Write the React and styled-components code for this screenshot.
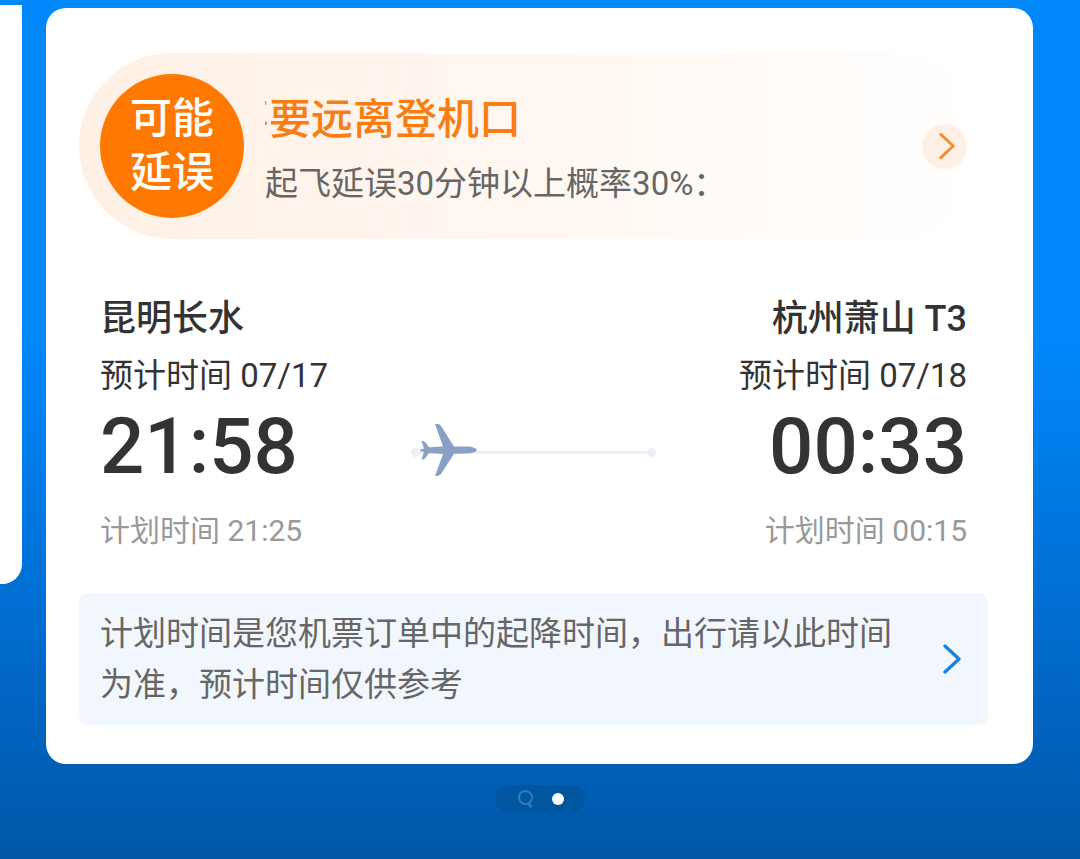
import styled, { createGlobalStyle } from "styled-components";

const GlobalStyle = createGlobalStyle`
    * {
        box-sizing: border-box;
    }

    body {
        margin: 0;
        font-family: Roboto, "Noto Sans CJK SC", sans-serif;
        color: #333333;
    }

    button {
        padding: 0;
        border: none;
        background: none;
        font: inherit;
        cursor: pointer;
    }
`

const departure = {
    airport: "昆明长水",
    date: "07/17",
    time: "21:58",
    planned: "21:25",
}

const arrival = {
    airport: "杭州萧山 T3",
    date: "07/18",
    time: "00:33",
    planned: "00:15",
}

const Chevron = ({ width, height }) => (
    <svg width={width} height={height} viewBox="0 0 18 30" fill="none" aria-hidden="true">
        <path d="M2 2L16 15L2 28" stroke="currentColor" strokeWidth="3.300" strokeLinecap="round" strokeLinejoin="round"/>
    </svg>
)

const DelayBanner = () => {
    return(
        <BannerContainer>
            <DelayBadge>可能<br/>延误</DelayBadge>
            <BannerTexts>
                <Marquee>
                    <MarqueeText>不要远离登机口</MarqueeText>
                </Marquee>
                <DelayInfo>起飞延误30分钟以上概率30%：</DelayInfo>
            </BannerTexts>
            <RoundButton type="button" aria-label="查看延误详情">
                <Chevron width={16} height={28}/>
            </RoundButton>
        </BannerContainer>
    )
}

const Station = ({ station, align }) => {
    return(
        <StationContainer $align={align}>
            <Airport>{station.airport}</Airport>
            <Estimated>预计时间 {station.date}</Estimated>
            <Time>{station.time}</Time>
            <Planned>计划时间 {station.planned}</Planned>
        </StationContainer>
    )
}

const Track = () => {
    return(
        <TrackContainer>
            <TrackDot/>
            <TrackLine/>
            <TrackDot/>
            <Plane viewBox="0 0 57 54" aria-hidden="true">
                <path d="M15 1H18Q20 1 21 3L34 23.500H49Q56 24.500 57 27Q56 29.500 49 30.300L34 30.800L21 51Q19 53.500 15 53L23 31L9 30L5 35.500Q3.500 37 1.500 36.500L4 29L0 27.800V26.500L4 25.500L1.500 18Q4 17.500 5.500 19.500L9 24.300L23 23.500Z"/>
            </Plane>
        </TrackContainer>
    )
}

const Notice = () => {
    return(
        <NoticeContainer>
            <NoticeText>计划时间是您机票订单中的起降时间，出行请以此时间为准，预计时间仅供参考</NoticeText>
            <NoticeButton type="button" aria-label="查看时间说明">
                <Chevron width={18} height={30}/>
            </NoticeButton>
        </NoticeContainer>
    )
}

const Pager = () => {
    return(
        <PagerContainer>
            <PagerButton type="button" aria-label="搜索">
                <svg width="18" height="20" viewBox="0 0 18 20" fill="none" stroke="#2f7dc3" strokeWidth="2" aria-hidden="true">
                    <circle cx="9.500" cy="8.500" r="6.500"/>
                    <path d="M12 13.500L15.500 18.500" strokeWidth="2.500"/>
                </svg>
            </PagerButton>
            <PagerButton type="button" aria-label="航班卡片" aria-current="true">
                <PagerDot/>
            </PagerButton>
        </PagerContainer>
    )
}

const App = () => {
    return(
        <Page lang="zh-CN">
            <GlobalStyle/>
            <Cards>
                <PreviousCard/>
                <Card>
                    <DelayBanner/>
                    <Route>
                        <Station station={departure} align="left"/>
                        <Track/>
                        <Station station={arrival} align="right"/>
                    </Route>
                    <Notice/>
                </Card>
            </Cards>
            <Pager/>
        </Page>
    )
}

export default App

const Page = styled.main`
    min-height: 100vh;
    display: flex;
    flex-direction: column;
    align-items: center;
    background: linear-gradient(180deg, #0087fa 0%, #0087fa 40%, #0062bd 86%, #0057a6 100%);
`

const Cards = styled.div`
    width: 100%;
    display: flex;
    align-items: stretch;
    gap: 24px;
    padding: 5px 47px 0 0;
`

const PreviousCard = styled.div`
    width: 22px;
    flex: none;
    margin-bottom: 180px;
    background: #FFFFFF;
    border-radius: 0 0 20px 0;
`

const Card = styled.section`
    flex: 1;
    min-width: 0;
    margin-top: 3px;
    padding: 45px 45px 39px 33px;
    background: #FFFFFF;
    border-radius: 20px;
`

const BannerContainer = styled.div`
    display: flex;
    align-items: center;
    padding: 21px;
    border-radius: 93px;
    background: linear-gradient(90deg, #fff0e5 0%, #fff9f4 60%, #ffffff 100%);
`

const DelayBadge = styled.div`
    width: 144px;
    height: 144px;
    flex: none;
    display: flex;
    align-items: center;
    justify-content: center;
    border-radius: 50%;
    background: #ff7800;
    color: #FFFFFF;
    font-size: 42px;
    font-weight: 500;
    line-height: 54px;
`

const BannerTexts = styled.div`
    flex: 1;
    min-width: 0;
    margin-left: 21px;
    padding-top: 11px;
`

const Marquee = styled.div`
    overflow: hidden;
    white-space: nowrap;
`

const MarqueeText = styled.div`
    margin-left: -38px;
    color: #f97d12;
    font-size: 42px;
    font-weight: 500;
    line-height: 64px;
`

const DelayInfo = styled.div`
    color: #666666;
    font-size: 33px;
    line-height: 64px;
`

const RoundButton = styled.button`
    width: 45px;
    height: 45px;
    flex: none;
    display: flex;
    align-items: center;
    justify-content: center;
    padding-left: 4px;
    border-radius: 50%;
    background: #fff0e5;
    color: #f58b33;
`

const Route = styled.div`
    display: flex;
    align-items: center;
    padding: 56px 21px 40px 21px;
`

const StationContainer = styled.div`
    text-align: ${({ $align }) => $align};
    white-space: nowrap;
`

const Airport = styled.h2`
    margin: 0;
    font-size: 36px;
    font-weight: 500;
    line-height: 48px;
`

const Estimated = styled.div`
    margin-top: 11px;
    font-size: 33px;
    line-height: 44px;
`

const Time = styled.div`
    margin-top: 7px;
    font-size: 78px;
    font-weight: 500;
    line-height: 84px;
`

const Planned = styled.div`
    margin-top: 20px;
    color: #999999;
    font-size: 30px;
    line-height: 44px;
`

const TrackContainer = styled.div`
    position: relative;
    flex: 1;
    display: flex;
    align-items: center;
    margin: 56px 83px 0;
`

const TrackDot = styled.span`
    width: 9px;
    height: 9px;
    border-radius: 50%;
    background: #ebeff6;
`

const TrackLine = styled.span`
    flex: 1;
    height: 3px;
    background: #ebeff6;
`

const Plane = styled.svg`
    position: absolute;
    left: 9px;
    bottom: -20px;
    width: 57px;
    height: 54px;
    fill: #8a9fc5;
`

const NoticeContainer = styled.div`
    display: flex;
    align-items: center;
    justify-content: space-between;
    padding: 15px 27px 15px 21px;
    border-radius: 9px;
    background: #f2f7fe;
`

const NoticeText = styled.p`
    max-width: 800px;
    margin: 0;
    color: #666666;
    font-size: 33px;
    line-height: 51px;
`

const NoticeButton = styled.button`
    display: flex;
    color: #1583e4;
`

const PagerContainer = styled.nav`
    width: 90px;
    height: 27px;
    display: flex;
    align-items: center;
    justify-content: center;
    gap: 18px;
    margin-top: 21px;
    border-radius: 14px;
    background: #00569f;
`

const PagerButton = styled.button`
    display: flex;
`

const PagerDot = styled.span`
    width: 12px;
    height: 12px;
    border-radius: 50%;
    background: #FFFFFF;
`
